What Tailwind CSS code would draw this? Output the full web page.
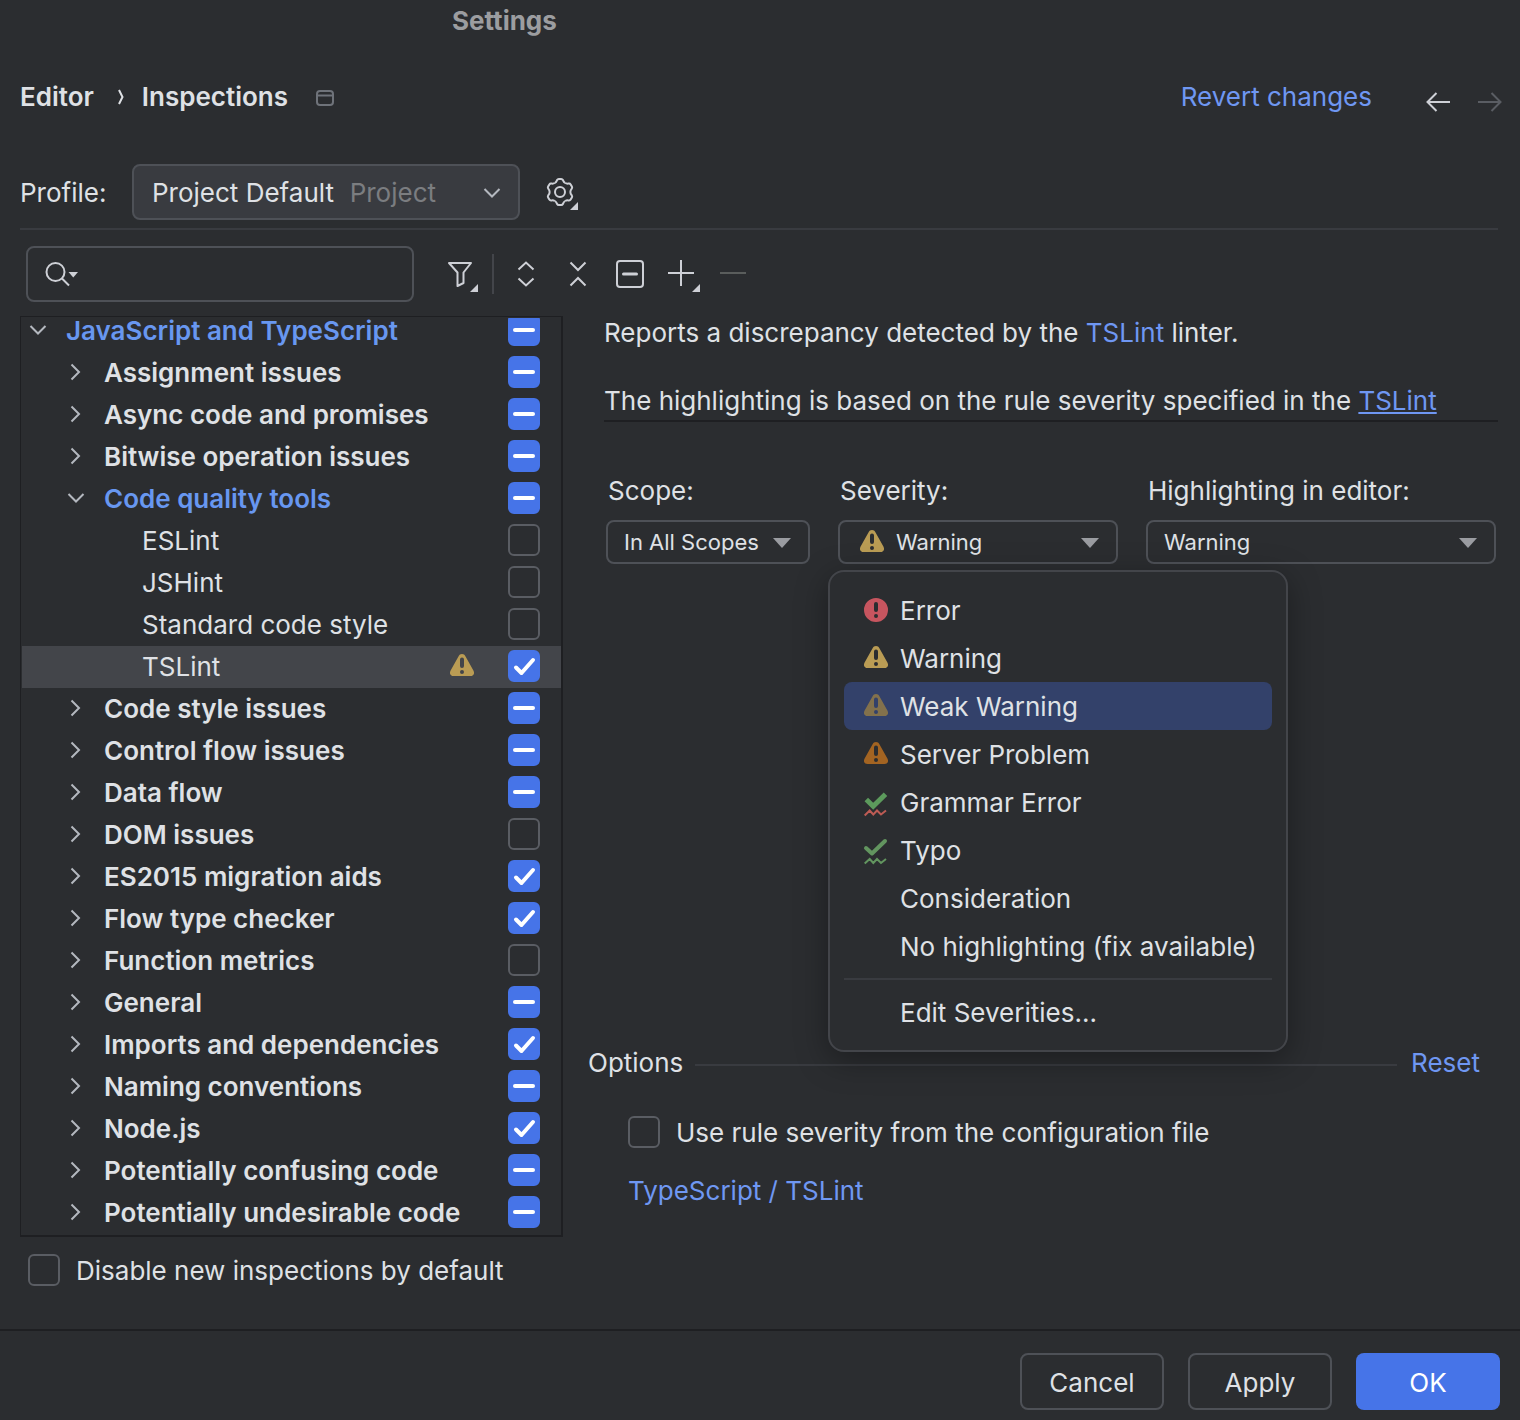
<!DOCTYPE html>
<html lang="en">
<head>
<meta charset="utf-8">
<meta name="viewport" content="width=device-width, initial-scale=1">
<title>Settings</title>
<script src="https://cdn.jsdelivr.net/npm/@tailwindcss/browser@4"></script>
</head>
<body class="flex min-h-screen flex-col bg-[#2b2d30] font-['Inter',sans-serif] text-[26px] leading-8 text-[#dfe1e5]">

<!-- Shared icons -->
<svg class="hidden" aria-hidden="true">
  <symbol id="warn" viewBox="0 0 24 24"><path fill="currentColor" fill-rule="evenodd" d="M12 0c1.6 0 2.7.9 3.4 2.2l8 14.3C25 19.500 23.500 22 20.500 22h-17C.5 22-1 19.500.6 16.500l8-14.300C9.300.9 10.400 0 12 0ZM12 3.500a2 2 0 0 0-2 2V12a2 2 0 0 0 4 0V5.500a2 2 0 0 0-2-2ZM12 16a2 2 0 1 0 0 4 2 2 0 0 0 0-4Z"/></symbol>
  <symbol id="error" viewBox="0 0 24 24"><path fill="currentColor" fill-rule="evenodd" d="M12 0a12 12 0 1 0 0 24 12 12 0 0 0 0-24ZM12 4a2 2 0 0 0-2 2v6a2 2 0 0 0 4 0V6a2 2 0 0 0-2-2ZM12 16a2 2 0 1 0 0 4 2 2 0 0 0 0-4Z"/></symbol>
  <symbol id="down" viewBox="0 0 18 10"><path fill="currentColor" d="M0 0h18L9 10Z"/></symbol>
  <symbol id="chev-down" viewBox="0 0 18 18"><path fill="none" stroke="currentColor" stroke-width="2" d="M1.500 5 9 12.500 16.500 5"/></symbol>
  <symbol id="chev-right" viewBox="0 0 18 18"><path fill="none" stroke="currentColor" stroke-width="2" d="M4.500 1.500 12 9 4.500 16.500"/></symbol>
  <symbol id="tick" viewBox="0 0 32 32"><path fill="none" stroke="#fff" stroke-width="4" stroke-linecap="round" stroke-linejoin="round" d="M8 17.500 13.500 23 25 10"/></symbol>
  <symbol id="dash" viewBox="0 0 32 32"><rect x="5" y="14" width="22" height="4" rx="2" fill="#fff"/></symbol>
  <symbol id="gear-lobe" overflow="visible"><path d="M-5.200-9C-3.400-10-3.400-11-2.900-12Q-2.400-13-1.200-13H1.200Q2.400-13 2.900-12C3.400-11 3.400-10 5.200-9"/></symbol>
</svg>

<header>
  <h1 class="flex h-[42px] items-center pl-[452px] font-bold text-[#9c9da0]">Settings</h1>
  <div class="flex h-[110px] items-center pl-5 pr-[18px]">
    <nav aria-label="Breadcrumb" class="flex items-center font-semibold">
      <a href="#editor">Editor</a>
      <svg class="ml-6 mr-[18px] h-4 w-[6px]" viewBox="0 0 6 16" fill="none" stroke="currentColor" stroke-width="2" aria-hidden="true"><path d="M1 1 4.500 8 1 15"/></svg>
      <span>Inspections</span>
    </nav>
    <svg class="ml-7 mt-[2px] h-[18px] w-[18px] text-[#6f737a]" viewBox="0 0 18 18" fill="none" stroke="currentColor" stroke-width="2" aria-hidden="true"><rect x="1" y="2" width="16" height="14" rx="3"/><path d="M1 6.500h16"/></svg>
    <a href="#revert" class="ml-auto text-[#6f97f2]">Revert changes</a>
    <button type="button" aria-label="Back" class="ml-[54px] mt-[10px] text-[#ced0d6]"><svg class="h-5 w-6" viewBox="0 0 24 20" fill="none" stroke="currentColor" stroke-width="2"><path d="M24 10H2M10.500 1 1.500 10l9 9"/></svg></button>
    <button type="button" aria-label="Forward" disabled class="ml-7 mt-[10px] text-[#5a5d63]"><svg class="h-5 w-6" viewBox="0 0 24 20" fill="none" stroke="currentColor" stroke-width="2"><path d="M0 10h22M13.500 1l9 9-9 9"/></svg></button>
  </div>
</header>

<main class="pl-5 pr-[22px] pt-3">
  <div class="flex h-14 items-center">
    <label for="profile" class="w-28 pt-[2px]">Profile:</label>
    <div class="grid w-[388px] items-center">
      <select id="profile" class="col-start-1 row-start-1 h-14 w-full appearance-none rounded-lg border-2 border-[#4e5157] bg-[#393b40] pl-[18px] pr-10 pt-[2px]"><option>Project Default</option></select>
      <span class="pointer-events-none col-start-1 row-start-1 ml-auto flex items-center pr-[19px] pt-[2px] text-[#7b7d80]">Project<svg class="ml-[47px] h-[18px] w-[18px] text-[#b4b8bf]" aria-hidden="true"><use href="#chev-down"/></svg></span>
    </div>
    <button type="button" aria-label="Profile actions" class="ml-5 text-[#ced0d6]">
      <svg class="size-10" viewBox="0 0 40 40"><g fill="none" stroke="currentColor" stroke-width="2" transform="translate(20 20)"><circle r="5"/><use href="#gear-lobe"/><use href="#gear-lobe" transform="rotate(60)"/><use href="#gear-lobe" transform="rotate(120)"/><use href="#gear-lobe" transform="rotate(180)"/><use href="#gear-lobe" transform="rotate(240)"/><use href="#gear-lobe" transform="rotate(300)"/></g><path fill="currentColor" d="M38 30v8h-8Z"/></svg>
    </button>
  </div>
  <hr class="mt-2 border-t-2 border-[#393b40]">

  <div class="mt-4 flex h-14 items-center pl-[6px] text-[#ced0d6]">
    <div class="grid w-[388px] items-center">
      <input type="search" aria-label="Search inspections" class="col-start-1 row-start-1 h-14 w-full rounded-lg border-2 border-[#4e5157] bg-transparent pl-14 pr-3 outline-none">
      <svg class="pointer-events-none col-start-1 row-start-1 ml-4 h-10 w-10" viewBox="0 0 40 40" fill="none" stroke="currentColor" stroke-width="2" aria-hidden="true"><circle cx="13.500" cy="18" r="9"/><path d="m20 24.500 7 7"/><path fill="currentColor" stroke="none" d="M26.500 18H36l-4.750 5.500Z"/></svg>
    </div>
    <div role="toolbar" aria-label="Inspections" class="ml-5 flex items-center">
      <button type="button" aria-label="Filter" class="grid h-10 w-[52px] place-items-center"><svg class="size-10" viewBox="0 0 40 40"><path fill="none" stroke="currentColor" stroke-width="2" stroke-linejoin="round" d="M9 9h22l-7.500 9.500V29l-6 3V18.500Z"/><path fill="currentColor" d="M38 30v8h-8Z"/></svg></button>
      <span class="mx-[6px] h-10 w-[2px] bg-[#43454a]"></span>
      <button type="button" aria-label="Expand all" class="grid h-10 w-[52px] place-items-center"><svg class="size-10" viewBox="0 0 40 40" fill="none" stroke="currentColor" stroke-width="2"><path d="M12.500 15.500 20 8.500l7.500 7M12.500 24.500l7.500 7 7.500-7"/></svg></button>
      <button type="button" aria-label="Collapse all" class="grid h-10 w-[52px] place-items-center"><svg class="size-10" viewBox="0 0 40 40" fill="none" stroke="currentColor" stroke-width="2"><path d="m12.500 8.500 7.500 7.500 7.500-7.500M12.500 31.500 20 24l7.500 7.500"/></svg></button>
      <button type="button" aria-label="Reset to empty" class="grid h-10 w-[52px] place-items-center"><svg class="size-10" viewBox="0 0 40 40" fill="none" stroke="currentColor"><rect x="7" y="7" width="26" height="26" rx="3" stroke-width="2"/><path stroke-width="3" stroke-linecap="round" d="M13.500 20h13"/></svg></button>
      <button type="button" aria-label="Add" class="grid h-10 w-[52px] place-items-center"><svg class="size-10" viewBox="0 0 40 40"><path fill="none" stroke="currentColor" stroke-width="2" d="M6 19h26M19 6v26"/><path fill="currentColor" d="M38 30v8h-8Z"/></svg></button>
      <button type="button" aria-label="Remove" disabled class="grid h-10 w-[52px] place-items-center text-[#5a5d5c]"><svg class="size-10" viewBox="0 0 40 40" fill="none" stroke="currentColor" stroke-width="2"><path d="M6 19h26"/></svg></button>
    </div>
  </div>

  <div class="mt-[14px] flex">
    <div class="w-[543px] shrink-0 border-b-2 border-l border-r-2 border-t border-[#1e1f22] pl-px pt-px">
      <div class="overflow-hidden">
        <ul id="tree" role="tree" aria-label="Inspections" class="-mt-2 pb-px"></ul>
      </div>
    </div>

    <section class="ml-[25px] flex min-w-0 flex-1 flex-col">
      <div class="ml-4 border-b-2 border-[#1e1f22] pb-[2px] leading-[34px]">
        <p>Reports a discrepancy detected by the <a href="#tslint" class="text-[#6f97f2]">TSLint</a> linter.</p>
        <p class="mt-[34px]">The highlighting is based on the rule severity specified in the <a href="#tslint" class="text-[#6f97f2] underline decoration-2 underline-offset-2">TSLint</a></p>
      </div>

      <div class="ml-[18px] mr-[2px] mt-[53px] flex gap-7">
        <div class="w-[204px]">
          <label for="scope" class="block pl-[2px]">Scope:</label>
          <div class="mt-[13px] grid items-center">
            <select id="scope" class="col-start-1 row-start-1 h-11 w-full appearance-none rounded-lg border-2 border-[#4e5157] bg-transparent pl-4 pr-8 text-[22px]"><option>In All Scopes</option></select>
            <svg class="pointer-events-none col-start-1 row-start-1 ml-auto mr-[19px] mt-[2px] h-[10px] w-[18px] text-[#9a9ca1]" aria-hidden="true"><use href="#down"/></svg>
          </div>
        </div>
        <div class="relative w-[280px]">
          <label for="severity" class="block pl-[2px]">Severity:</label>
          <div class="mt-[13px] grid items-center">
            <select id="severity" class="col-start-1 row-start-1 h-11 w-full appearance-none rounded-lg border-2 border-[#4e5157] bg-transparent pl-14 pr-10 text-[22px]"><option>Warning</option></select>
            <svg class="pointer-events-none col-start-1 row-start-1 ml-[22px] size-6 text-[#ba9c54]" aria-hidden="true"><use href="#warn"/></svg>
            <svg class="pointer-events-none col-start-1 row-start-1 ml-auto mr-[19px] mt-[2px] h-[10px] w-[18px] text-[#9a9ca1]" aria-hidden="true"><use href="#down"/></svg>
          </div>
          <ul role="listbox" aria-label="Severity" class="absolute -left-[10px] top-full mt-[6px] w-[460px] rounded-2xl border-2 border-[#43454a] bg-[#2b2d30] p-[14px] leading-[48px] shadow-[0_8px_32px_rgba(0,0,0,0.35)]">
            <li role="option" class="flex h-12 items-center gap-3 px-5"><svg class="size-6 text-[#c7555f]"><use href="#error"/></svg><span class="pt-[2px]">Error</span></li>
            <li role="option" class="flex h-12 items-center gap-3 px-5"><svg class="size-6 text-[#ba9c54]"><use href="#warn"/></svg><span class="pt-[2px]">Warning</span></li>
            <li role="option" aria-selected="true" class="flex h-12 items-center gap-3 rounded-lg bg-[#33416a] px-5"><svg class="size-6 text-[#83714c]"><use href="#warn"/></svg><span class="pt-[2px]">Weak Warning</span></li>
            <li role="option" class="flex h-12 items-center gap-3 px-5"><svg class="size-6 text-[#a36422]"><use href="#warn"/></svg><span class="pt-[2px]">Server Problem</span></li>
            <li role="option" class="flex h-12 items-center gap-3 px-5"><svg class="size-6 overflow-visible" viewBox="0 0 24 24" fill="none"><path stroke="#5c9a5c" stroke-width="5" d="M2.300 9.500 9.200 16.300 21.500 4.200"/><path stroke="#bd5b54" stroke-width="2" d="M.7 25.500 5.700 20.500 9.300 24.500 13 20.500 17 24.500 22 20.500"/></svg><span class="pt-[2px]">Grammar Error</span></li>
            <li role="option" class="flex h-12 items-center gap-3 px-5"><svg class="size-6 overflow-visible" viewBox="0 0 24 24" fill="none" stroke="#62955f"><path stroke-width="4" stroke-linecap="round" stroke-linejoin="round" d="M2 10 8 15.500 21 3"/><path stroke-width="2" d="M.7 25.500 5.700 21 9.300 25 13 21 17 25 22 21"/></svg><span class="pt-[2px]">Typo</span></li>
            <li role="option" class="flex h-12 items-center pl-14"><span class="pt-[2px]">Consideration</span></li>
            <li role="option" class="flex h-12 items-center whitespace-nowrap pl-14"><span class="pt-[2px]">No highlighting (fix available)</span></li>
            <li role="separator" class="my-2 h-[2px] bg-[#393b40]"></li>
            <li role="option" class="flex h-12 items-center pl-14"><span class="pt-[2px]">Edit Severities...</span></li>
          </ul>
        </div>
        <div class="flex-1">
          <label for="highlighting" class="block whitespace-nowrap pl-[2px]">Highlighting in editor:</label>
          <div class="mt-[13px] grid items-center">
            <select id="highlighting" class="col-start-1 row-start-1 h-11 w-full appearance-none rounded-lg border-2 border-[#4e5157] bg-transparent pl-4 pr-10 text-[22px]"><option>Warning</option></select>
            <svg class="pointer-events-none col-start-1 row-start-1 ml-auto mr-[19px] mt-[2px] h-[10px] w-[18px] text-[#9a9ca1]" aria-hidden="true"><use href="#down"/></svg>
          </div>
        </div>
      </div>

      <div class="mt-auto pb-[30px]">
        <div class="flex items-center pr-[18px]">
          <h2>Options</h2>
          <span class="ml-3 mr-[14px] mt-1 h-[2px] flex-1 bg-[#393b40]"></span>
          <a href="#reset" class="text-[#6f97f2]">Reset</a>
        </div>
        <div class="mt-9 flex items-center gap-4 pl-10">
          <input id="rule-severity" type="checkbox" class="size-8 appearance-none rounded-md border-2 border-[#5a5d63] checked:bg-[#4674e8]">
          <label for="rule-severity" class="pt-[2px]">Use rule severity from the configuration file</label>
        </div>
        <a href="#typescript-tslint" class="ml-10 mt-[26px] block w-fit text-[#6f97f2]">TypeScript / TSLint</a>
      </div>
    </section>
  </div>

  <div class="mt-4 flex items-center gap-4 pl-2">
    <input id="disable-new" type="checkbox" class="size-8 appearance-none rounded-md border-2 border-[#5a5d63] checked:bg-[#4674e8]">
    <label for="disable-new" class="pt-[2px]">Disable new inspections by default</label>
  </div>
</main>

<footer class="mt-auto flex justify-end gap-6 border-t-2 border-[#1e1f22] pb-[10px] pr-5 pt-[22px]">
  <button type="button" class="h-[57px] w-36 rounded-lg border-2 border-[#4e5157] pt-[2px]">Cancel</button>
  <button type="button" class="h-[57px] w-36 rounded-lg border-2 border-[#4e5157] pt-[2px]">Apply</button>
  <button type="button" class="h-[57px] w-36 rounded-lg bg-[#4674e8] pt-[2px] text-white">OK</button>
</footer>

<script>
  // [level, name, checkbox state, expanded]
  const rows = [
    [0, 'JavaScript and TypeScript', 'mixed', true],
    [1, 'Assignment issues', 'mixed'],
    [1, 'Async code and promises', 'mixed'],
    [1, 'Bitwise operation issues', 'mixed'],
    [1, 'Code quality tools', 'mixed', true],
    [2, 'ESLint', 'off'],
    [2, 'JSHint', 'off'],
    [2, 'Standard code style', 'off'],
    [2, 'TSLint', 'on'],
    [1, 'Code style issues', 'mixed'],
    [1, 'Control flow issues', 'mixed'],
    [1, 'Data flow', 'mixed'],
    [1, 'DOM issues', 'off'],
    [1, 'ES2015 migration aids', 'on'],
    [1, 'Flow type checker', 'on'],
    [1, 'Function metrics', 'off'],
    [1, 'General', 'mixed'],
    [1, 'Imports and dependencies', 'on'],
    [1, 'Naming conventions', 'mixed'],
    [1, 'Node.js', 'on'],
    [1, 'Potentially confusing code', 'mixed'],
    [1, 'Potentially undesirable code', 'mixed'],
  ];
  const indent = ['pl-[7px]', 'pl-[45px]', 'pl-[120px]'];
  document.getElementById('tree').innerHTML = rows.map(([level, name, state, open], i) => {
    const selected = name === 'TSLint';
    const chevron = level === 2 ? '' :
      `<svg class="mr-[19px] h-[18px] w-[18px] shrink-0 text-[#b4b8bf]" aria-hidden="true"><use href="#${open ? 'chev-down' : 'chev-right'}"/></svg>`;
    return `<li role="treeitem" aria-level="${level + 1}" class="flex h-[42px] items-center pb-[2px] pr-[21px] ${indent[level]} ${selected ? 'bg-[#43454a]' : ''}">
      ${chevron}
      <label for="row-${i}" class="whitespace-nowrap pt-[2px] leading-6 ${level < 2 ? 'font-semibold' : ''} ${open ? 'text-[#6897f0]' : ''}">${name}</label>
      ${selected ? '<svg class="ml-auto mr-[34px] size-6 text-[#ba9c54]" aria-hidden="true"><use href="#warn"/></svg>' : ''}
      <span class="grid size-8 shrink-0 ${selected ? '' : 'ml-auto'}">
        <input id="row-${i}" type="checkbox" data-state="${state}" class="peer col-start-1 row-start-1 size-8 appearance-none rounded-md border-2 border-[#5a5d63] checked:border-[#4674e8] checked:bg-[#4674e8] indeterminate:border-[#4674e8] indeterminate:bg-[#4674e8]">
        <svg class="pointer-events-none col-start-1 row-start-1 hidden size-8 peer-checked:block"><use href="#tick"/></svg>
        <svg class="pointer-events-none col-start-1 row-start-1 hidden size-8 peer-indeterminate:block"><use href="#dash"/></svg>
      </span>
    </li>`;
  }).join('');
  document.querySelectorAll('#tree input').forEach((box) => {
    box.checked = box.dataset.state === 'on';
    box.indeterminate = box.dataset.state === 'mixed';
  });
</script>
</body>
</html>
